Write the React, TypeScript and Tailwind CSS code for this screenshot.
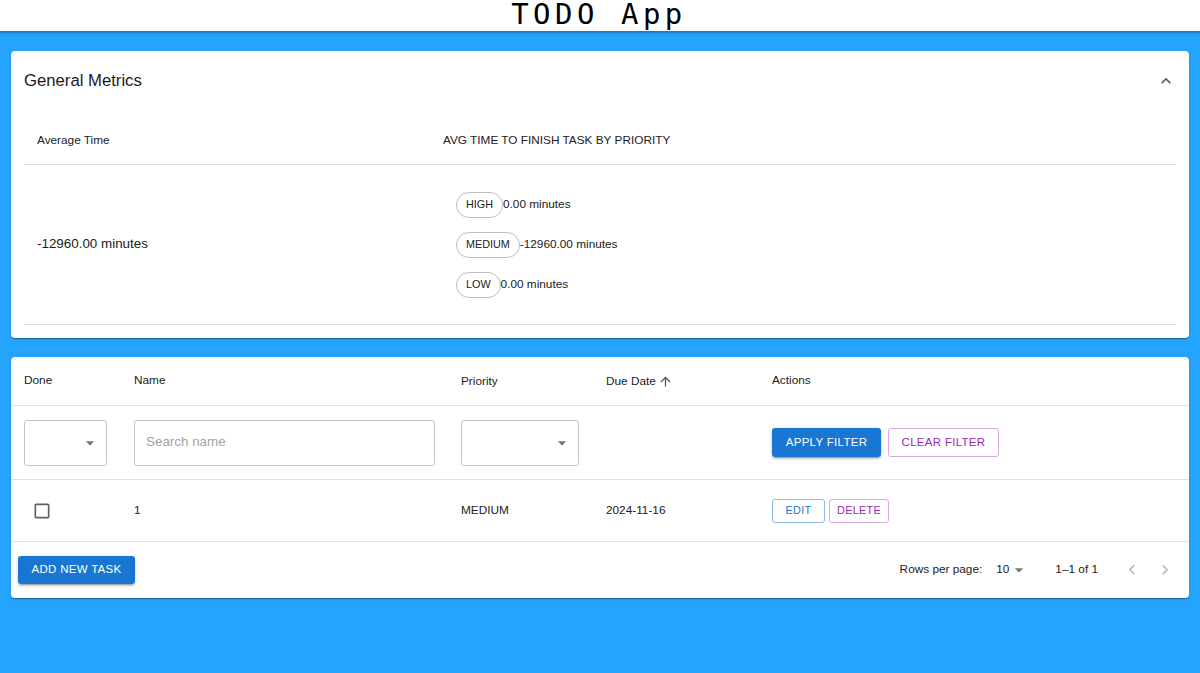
import React from "react";

const font = { fontFamily: '"Liberation Sans", Arial, sans-serif' };

function Icon({ d, className }: { d: string; className?: string }) {
  return (
    <svg viewBox="0 0 24 24" className={className} fill="currentColor">
      <path d={d} />
    </svg>
  );
}

const ICONS = {
  expandLess: "M12 8l-6 6 1.41 1.41L12 10.83l4.59 4.58L18 14z",
  dropDown: "M7 10l5 5 5-5z",
  arrowUp: "M4 12l1.41 1.41L11 7.83V20h2V7.83l5.58 5.59L20 12l-8-8-8 8z",
  left: "M15.41 16.09l-4.58-4.59 4.58-4.59L14 5.5l-6 6 6 6z",
  right: "M8.59 16.34l4.58-4.59-4.58-4.59L10 5.75l6 6-6 6z",
  checkbox:
    "M19 5v14H5V5h14m0-2H5c-1.11 0-2 .9-2 2v14c0 1.1.89 2 2 2h14c1.11 0 2-.9 2-2V5c0-1.1-.89-2-2-2z",
};

function Chip({ label }: { label: string }) {
  return (
    <span className="h-[26px] px-[9px] rounded-full border border-[#bdbdbd] text-[10.8px] text-[#212121] flex items-center">
      {label}
    </span>
  );
}

function Select({ width }: { width: string }) {
  return (
    <div className={`${width} h-[46px] rounded-[3px] border border-[#c4c4c4] flex items-center justify-end pr-[6px]`}>
      <Icon d={ICONS.dropDown} className="w-[20px] h-[20px] text-[#757575]" />
    </div>
  );
}

function Metrics() {
  const rows = [
    { p: "HIGH", v: "0.00 minutes" },
    { p: "MEDIUM", v: "-12960.00 minutes" },
    { p: "LOW", v: "0.00 minutes" },
  ];
  return (
    <div className="bg-white rounded-[4px] shadow-[0_2px_1px_-1px_rgba(0,0,0,0.2),0_1px_1px_0_rgba(0,0,0,0.14),0_1px_3px_0_rgba(0,0,0,0.12)]">
      <div className="h-[59px] px-[13px] flex items-center justify-between">
        <span className="text-[16.7px] text-[#1a1a1a] pt-[1px]">General Metrics</span>
        <Icon d={ICONS.expandLess} className="w-[20px] h-[20px] text-[#555]" />
      </div>
      <div className="pt-[7px] pb-[13px] px-[13px]">
        <div className="h-[48px] border-b border-[#e0e0e0] flex items-center text-[11.8px] text-[#212121]">
          <div className="w-[406px] pl-[13px]">Average Time</div>
          <div className="pl-[13px]">AVG TIME TO FINISH TASK BY PRIORITY</div>
        </div>
        <div className="h-[160px] border-b border-[#e0e0e0] flex items-center text-[#212121]">
          <div className="w-[406px] pl-[13px] text-[13.4px]">-12960.00 minutes</div>
          <div className="pl-[26px] flex flex-col gap-[14px]">
            {rows.map((r) => (
              <div key={r.p} className="flex items-center text-[11.8px]">
                <Chip label={r.p} />
                <span>{r.v}</span>
              </div>
            ))}
          </div>
        </div>
      </div>
    </div>
  );
}

const cols = "grid grid-cols-[110px_327px_145px_166px_1fr]";
const btnShadow =
  "shadow-[0_3px_1px_-2px_rgba(0,0,0,0.2),0_2px_2px_0_rgba(0,0,0,0.14),0_1px_5px_0_rgba(0,0,0,0.12)]";

function Tasks() {
  return (
    <div className="bg-white rounded-[4px] shadow-[0_2px_1px_-1px_rgba(0,0,0,0.2),0_1px_1px_0_rgba(0,0,0,0.14),0_1px_3px_0_rgba(0,0,0,0.12)] text-[#212121]">
      <div className={`${cols} h-[49px] border-b border-[#e0e0e0] items-center text-[11.8px]`}>
        <div className="pl-[13px]">Done</div>
        <div className="pl-[13px]">Name</div>
        <div className="pl-[13px] pt-[1px]">Priority</div>
        <div className="pl-[13px] pt-[1px] flex items-center gap-[2px]">
          Due Date
          <Icon d={ICONS.arrowUp} className="w-[15px] h-[15px] text-[#555]" />
        </div>
        <div className="pl-[13px]">Actions</div>
      </div>
      <div className={`${cols} h-[74px] border-b border-[#e0e0e0] items-center`}>
        <div className="pl-[13px]">
          <Select width="w-[83px]" />
        </div>
        <div className="pl-[13px]">
          <div className="w-[301px] h-[46px] rounded-[3px] border border-[#c4c4c4] flex items-center pl-[11px] text-[13.4px] text-[#a2a2a2]">
            Search name
          </div>
        </div>
        <div className="pl-[13px]">
          <Select width="w-[118px]" />
        </div>
        <div />
        <div className="pl-[13px] flex items-center gap-[7px]">
          <button className={`w-[109px] h-[29px] rounded-[3px] bg-[#1976d2] text-white text-[11.5px] tracking-[0.3px] ${btnShadow}`}>
            APPLY FILTER
          </button>
          <button className="w-[111px] h-[29px] rounded-[3px] border border-[#d9a8e2] text-[#9c27b0] text-[11.5px] tracking-[0.3px]">
            CLEAR FILTER
          </button>
        </div>
      </div>
      <div className={`${cols} h-[62px] border-b border-[#e0e0e0] items-center text-[11.8px]`}>
        <div className="pl-[21px]">
          <Icon d={ICONS.checkbox} className="w-[20px] h-[20px] text-[#616161]" />
        </div>
        <div className="pl-[13px]">1</div>
        <div className="pl-[13px]">MEDIUM</div>
        <div className="pl-[13px]">2024-11-16</div>
        <div className="pl-[13px] flex items-center gap-[4px]">
          <button className="w-[53px] h-[24px] rounded-[3px] border border-[#8cbbe9] text-[#1976d2] text-[10.8px] tracking-[0.3px]">
            EDIT
          </button>
          <button className="w-[60px] h-[24px] rounded-[3px] border border-[#d9a8e2] text-[#9c27b0] text-[10.8px] tracking-[0.3px]">
            DELETE
          </button>
        </div>
      </div>
      <div className="h-[56px] flex items-center justify-between pl-[7px] pr-[8px]">
        <button className={`w-[117px] h-[28px] rounded-[3px] bg-[#1976d2] text-white text-[11.5px] tracking-[0.3px] ${btnShadow}`}>
          ADD NEW TASK
        </button>
        <div className="flex items-center text-[11.8px]">
          <span>Rows per page:</span>
          <span className="ml-[14px]">10</span>
          <Icon d={ICONS.dropDown} className="w-[20px] h-[20px] text-[#757575]" />
          <span className="ml-[26px]">1–1 of 1</span>
          <div className="ml-[17px] w-[33px] h-[33px] flex items-center justify-center">
            <Icon d={ICONS.left} className="w-[20px] h-[20px] text-[#bdbdbd]" />
          </div>
          <div className="w-[33px] h-[33px] flex items-center justify-center">
            <Icon d={ICONS.right} className="w-[20px] h-[20px] text-[#bdbdbd]" />
          </div>
        </div>
      </div>
    </div>
  );
}

export default function App() {
  return (
    <div className="min-h-screen bg-[#25a4fd]" style={font}>
      <header className="h-[31px] bg-white flex justify-center items-start shadow-[0_2px_2px_rgba(0,40,90,0.35)] relative">
        <h1
          className="text-[29px] leading-[29px] tracking-[4.5px] text-black pr-[2px]"
          style={{ fontFamily: '"DejaVu Sans Mono", monospace' }}
        >
          TODO App
        </h1>
      </header>
      <main className="px-[11px] pt-[20px] flex flex-col gap-[19px]">
        <Metrics />
        <Tasks />
      </main>
    </div>
  );
}
